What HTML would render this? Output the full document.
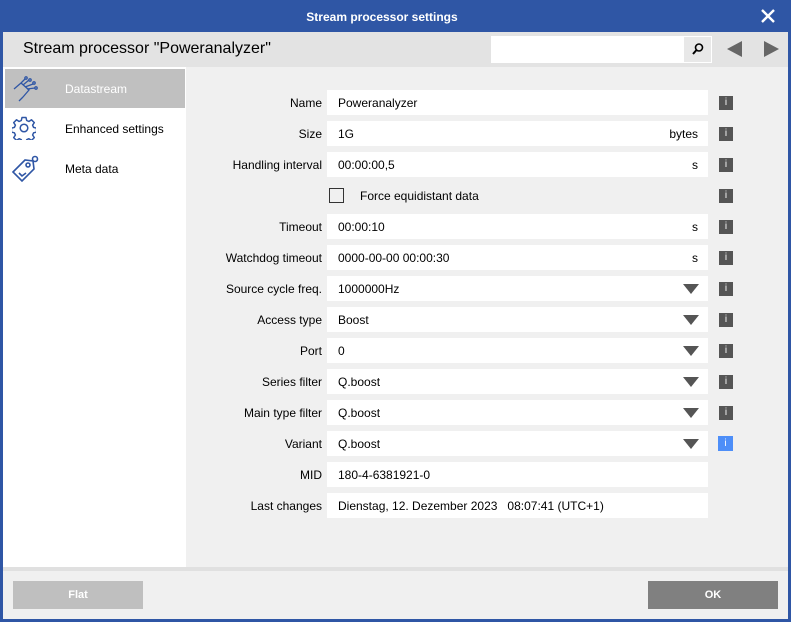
<!DOCTYPE html>
<html><head><style>
*{margin:0;padding:0;box-sizing:border-box}
body{width:791px;height:622px;background:#2f56a5;font-family:"Liberation Sans",sans-serif;font-size:12px;color:#000;position:relative;overflow:hidden}
.abs{position:absolute}
.title{left:0;top:0;width:764px;height:32px;color:#fff;font-weight:bold;font-size:12px;text-align:center;line-height:34px}
.win{left:3px;top:32px;width:785px;height:587px;background:#f0f0f0}
.hdr{left:3px;top:32px;width:785px;height:35px;background:#e3e3e3}
.side{left:3px;top:67px;width:183px;height:500px;background:#fff}
.sel{left:5px;top:69px;width:180px;height:39px;background:#c0c0c0}
.nav{left:65px;font-size:12px}
.lbl{right:469px;width:200px;text-align:right}
.fld{left:327px;width:381px;height:25px;background:#fff;padding-left:11px;line-height:26px}
.unit{position:absolute;right:10px;top:0}
.arr{position:absolute;right:9px;top:8px;width:0;height:0;border-left:8px solid transparent;border-right:8px solid transparent;border-top:10px solid #555}
.inf{left:719px;width:14px;height:14px;background:#555;color:#fff;font-size:10px;text-align:center;line-height:14px}
.btn{top:581px;width:130px;height:28px;color:#fff;font-weight:bold;font-size:11px;text-align:center;line-height:29px}
</style></head><body>
<div class="abs title">Stream processor settings</div>
<svg class="abs" style="left:761px;top:9px" width="14" height="14"><path d="M1 1L13 13M13 1L1 13" stroke="#fff" stroke-width="2.4"/></svg>
<div class="abs win"></div>
<div class="abs hdr"></div>
<div class="abs" style="left:23px;top:40px;font-size:16px">Stream processor "Poweranalyzer"</div>
<div class="abs" style="left:491px;top:36px;width:221px;height:27px;background:#fff"></div>
<div class="abs" style="left:684px;top:37px;width:27px;height:25px;background:#e8e8e8"></div>
<svg class="abs" style="left:691px;top:42px" width="14" height="14"><circle cx="8" cy="5.5" r="3.5" fill="none" stroke="#000" stroke-width="1.6"/><path d="M5.5 8L2 12" stroke="#000" stroke-width="2"/></svg>
<div class="abs" style="left:727px;top:41px;width:0;height:0;border-top:8px solid transparent;border-bottom:8px solid transparent;border-right:15px solid #666"></div>
<div class="abs" style="left:764px;top:41px;width:0;height:0;border-top:8px solid transparent;border-bottom:8px solid transparent;border-left:15px solid #666"></div>
<div class="abs side"></div>
<div class="abs sel"></div>
<svg class="abs" style="left:11px;top:76px" width="28" height="26" fill="none" stroke="#2f56a5" stroke-width="1.3"><path d="M3 13L10 7L18 14L12 21M10 7l4-4M12 9l6-5M14 11l8-3M16 13l8-1M8 25l4-4"/><circle cx="15" cy="2" r="1.2"/><circle cx="19" cy="4" r="1.2"/><circle cx="23" cy="7" r="1.2"/><circle cx="25" cy="12" r="1.2"/></svg>
<div class="abs nav" style="top:82px;color:#fff">Datastream</div>
<svg class="abs" style="left:12px;top:116px" width="24" height="24" fill="none" stroke="#2f56a5" stroke-width="1.5" stroke-linejoin="round"><path d="M10 1.5h4l.7 3 2.2 1 2.6-1.7 2.8 2.8-1.7 2.6 1 2.2 3 .7v4l-3 .7-1 2.2 1.7 2.6-2.8 2.8-2.6-1.7-2.2 1-.7 3h-4l-.7-3-2.2-1-2.6 1.7-2.8-2.8 1.7-2.6-1-2.2-3-.7v-4l3-.7 1-2.2-1.7-2.6 2.8-2.8 2.6 1.7 2.2-1z"/><circle cx="12" cy="12" r="3.8"/></svg>
<div class="abs nav" style="top:122px">Enhanced settings</div>
<svg class="abs" style="left:11px;top:155px" width="28" height="28" fill="none" stroke="#2f56a5" stroke-width="1.6"><path d="M2 17L14 5l8 1 1 8-12 12z"/><circle cx="17" cy="10" r="2"/><circle cx="24" cy="4" r="2.5"/><path d="M8 18l3 3 4-3"/></svg>
<div class="abs nav" style="top:162px">Meta data</div>

<div class="abs lbl" style="top:96px">Name</div>
<div class="abs fld" style="top:90px">Poweranalyzer</div>
<div class="abs inf" style="top:96px">i</div>
<div class="abs lbl" style="top:127px">Size</div>
<div class="abs fld" style="top:121px">1G<span class="unit">bytes</span></div>
<div class="abs inf" style="top:127px">i</div>
<div class="abs lbl" style="top:158px">Handling interval</div>
<div class="abs fld" style="top:152px">00:00:00,5<span class="unit">s</span></div>
<div class="abs inf" style="top:158px">i</div>
<div class="abs" style="left:329px;top:188px;width:15px;height:15px;border:1px solid #333;background:#f0f0f0"></div>
<div class="abs" style="left:360px;top:189px">Force equidistant data</div>
<div class="abs inf" style="top:189px">i</div>
<div class="abs lbl" style="top:220px">Timeout</div>
<div class="abs fld" style="top:214px">00:00:10<span class="unit">s</span></div>
<div class="abs inf" style="top:220px">i</div>
<div class="abs lbl" style="top:251px">Watchdog timeout</div>
<div class="abs fld" style="top:245px">0000-00-00 00:00:30<span class="unit">s</span></div>
<div class="abs inf" style="top:251px">i</div>
<div class="abs lbl" style="top:282px">Source cycle freq.</div>
<div class="abs fld" style="top:276px">1000000Hz<span class="arr"></span></div>
<div class="abs inf" style="top:282px">i</div>
<div class="abs lbl" style="top:313px">Access type</div>
<div class="abs fld" style="top:307px">Boost<span class="arr"></span></div>
<div class="abs inf" style="top:313px">i</div>
<div class="abs lbl" style="top:344px">Port</div>
<div class="abs fld" style="top:338px">0<span class="arr"></span></div>
<div class="abs inf" style="top:344px">i</div>
<div class="abs lbl" style="top:375px">Series filter</div>
<div class="abs fld" style="top:369px">Q.boost<span class="arr"></span></div>
<div class="abs inf" style="top:375px">i</div>
<div class="abs lbl" style="top:406px">Main type filter</div>
<div class="abs fld" style="top:400px">Q.boost<span class="arr"></span></div>
<div class="abs inf" style="top:406px">i</div>
<div class="abs lbl" style="top:437px">Variant</div>
<div class="abs fld" style="top:431px">Q.boost<span class="arr"></span></div>
<div class="abs inf" style="top:436px;left:718px;width:15px;height:15px;background:#4d8ef8;line-height:15px">i</div>
<div class="abs lbl" style="top:468px">MID</div>
<div class="abs fld" style="top:462px">180-4-6381921-0</div>
<div class="abs lbl" style="top:499px">Last changes</div>
<div class="abs fld" style="top:493px">Dienstag, 12. Dezember 2023 &nbsp; 08:07:41 (UTC+1)</div>

<div class="abs" style="left:3px;top:567px;width:785px;height:4px;background:#e0e0e0"></div>
<div class="abs btn" style="left:13px;background:#bfbfbf">Flat</div>
<div class="abs btn" style="left:648px;background:#808080">OK</div>
</body></html>
